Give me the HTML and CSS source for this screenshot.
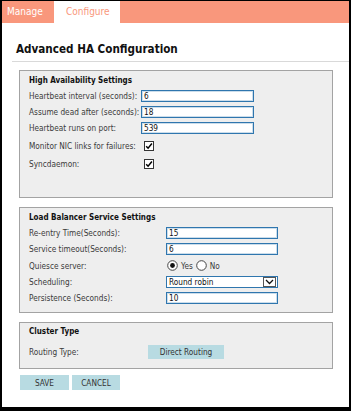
FILE: index.html
```html
<!DOCTYPE html>
<html>
<head>
<meta charset="utf-8">
<link rel="stylesheet" href="styles.css">
</head>
<body>
<div class="frame">
  <div class="tabs">
    <div class="tab tab-manage">Manage</div>
    <div class="tab tab-active">Configure</div>
  </div>
  <div class="content">
    <div class="page-head"><h1 class="title">Advanced HA Configuration</h1></div>

    <div class="panel panel-ha">
      <div class="panel-title">High Availability Settings</div>
      <div class="row"><span class="label lw1">Heartbeat interval (seconds):</span><span class="input w1">6</span></div>
      <div class="row"><span class="label lw1">Assume dead after (seconds):</span><span class="input w1">18</span></div>
      <div class="row"><span class="label lw1">Heartbeat runs on port:</span><span class="input w1">539</span></div>
      <div class="row row-tall"><span class="label lw1">Monitor NIC links for failures:</span><span class="check"><svg width="10" height="10" viewBox="0 0 10 10"><rect x="0.5" y="0.5" width="9" height="9" fill="#fff" stroke="#333"/><path d="M2.2 5.2 L4.1 7.2 L7.9 2.6" fill="none" stroke="#000" stroke-width="1.5"/></svg></span></div>
      <div class="row row-tall2"><span class="label lw1">Syncdaemon:</span><span class="check"><svg width="10" height="10" viewBox="0 0 10 10"><rect x="0.5" y="0.5" width="9" height="9" fill="#fff" stroke="#333"/><path d="M2.2 5.2 L4.1 7.2 L7.9 2.6" fill="none" stroke="#000" stroke-width="1.5"/></svg></span></div>
    </div>

    <div class="panel panel-lb">
      <div class="panel-title">Load Balancer Service Settings</div>
      <div class="row"><span class="label lw2">Re-entry Time(Seconds):</span><span class="input w2">15</span></div>
      <div class="row"><span class="label lw2">Service timeout(Seconds):</span><span class="input w2">6</span></div>
      <div class="row row-mid"><span class="label lw2">Quiesce server:</span>
        <span class="radio"><svg width="11" height="11" viewBox="0 0 11 11"><circle cx="5.5" cy="5.5" r="4.8" fill="#fff" stroke="#444"/><circle cx="5.5" cy="5.5" r="2.4" fill="#111"/></svg></span><span class="radio-text">Yes</span>
        <span class="radio radio2"><svg width="11" height="11" viewBox="0 0 11 11"><circle cx="5.5" cy="5.5" r="4.8" fill="#fff" stroke="#444"/></svg></span><span class="radio-text">No</span>
      </div>
      <div class="row"><span class="label lw2">Scheduling:</span><span class="select w2"><span class="select-text">Round robin</span><span class="select-btn"><svg width="9" height="6" viewBox="0 0 9 6"><path d="M1 1 L4.5 4.5 L8 1" fill="none" stroke="#111" stroke-width="1.3"/></svg></span></span></div>
      <div class="row"><span class="label lw2">Persistence (Seconds):</span><span class="input w2">10</span></div>
    </div>

    <div class="panel panel-ct">
      <div class="panel-title">Cluster Type</div>
      <div class="row row-btn"><span class="label lw3">Routing Type:</span><span class="btn btn-route">Direct Routing</span></div>
    </div>

    <div class="actions">
      <span class="btn btn-save">SAVE</span>
      <span class="btn btn-cancel">CANCEL</span>
    </div>
  </div>
</div>
</body>
</html>
```

FILE: styles.css
```css
html, body {
  margin: 0;
  padding: 0;
  background: #fff;
}
.frame {
  width: 351px;
  height: 411px;
  box-sizing: border-box;
  border-style: solid;
  border-color: #000;
  border-width: 1px 2px 4px 2px;
  background: #fff;
  font-family: "DejaVu Sans Condensed", "DejaVu Sans", "Liberation Sans", sans-serif;
  color: #333;
  overflow: hidden;
}
.tabs {
  display: flex;
  height: 22px;
  background: #f9977c;
}
.tab {
  font-size: 10px;
  line-height: 22px;
  height: 22px;
  box-sizing: border-box;
}
.tab-manage {
  width: 52px;
  padding-left: 5px;
  color: #fff;
}
.tab-active {
  width: 66px;
  padding-left: 12px;
  background: #fff;
  color: #f9977c;
}
.content {
  padding-left: 10px;
}
.page-head {
  height: 39px;
  box-sizing: border-box;
  padding-top: 18px;
  border-bottom: 1px solid #d9d9d9;
}
.title {
  margin: 0;
  padding-left: 4px;
  font-size: 11.6px;
  line-height: 16px;
  font-weight: bold;
  color: #111;
}
.panel {
  margin-left: 7px;
  width: 314px;
  box-sizing: border-box;
  border: 1px solid #a3a3a3;
  background: #eeeeee;
  padding-left: 9px;
}
.panel-ha {
  margin-top: 8px;
  padding-top: 3px;
  padding-bottom: 25px;
}
.panel-lb {
  margin-top: 9px;
  padding-top: 3px;
  padding-bottom: 6px;
}
.panel-ct {
  margin-top: 9px;
  padding-top: 2px;
  padding-bottom: 9px;
}
.panel-title {
  font-size: 8px;
  font-weight: bold;
  line-height: 14px;
  height: 14px;
  color: #111;
}
.row {
  display: flex;
  align-items: center;
  height: 16px;
  font-size: 8.2px;
}
.row-tall {
  height: 20px;
}
.row-tall2 {
  height: 16px;
}
.row-mid {
  height: 17px;
}
.row-btn {
  height: 14px;
  margin-top: 6px;
}
.label {
  flex: none;
  white-space: nowrap;
  color: #3a3a3a;
}
.lw1 { width: 112px; }
.lw2 { width: 137px; }
.lw3 { width: 119px; }
.input {
  box-sizing: border-box;
  height: 12px;
  line-height: 10px;
  border: 1px solid #2f76ae;
  box-shadow: inset 0 0 0 1px rgba(47, 118, 174, 0.25);
  background: #fff;
  padding-left: 2px;
  color: #111;
}
.w1 { width: 113px; }
.w2 { width: 112px; }
.check {
  display: flex;
  margin-left: 3px;
}
.radio {
  display: flex;
  margin-left: 1px;
}
.radio2 {
  margin-left: 3px;
}
.radio-text {
  margin-left: 3px;
  color: #3a3a3a;
}
.select {
  box-sizing: border-box;
  height: 12px;
  border: 1px solid #2f76ae;
  background: #fff;
  display: flex;
  align-items: center;
  justify-content: space-between;
  color: #111;
}
.select-text {
  padding-left: 2px;
  line-height: 10px;
}
.select-btn {
  box-sizing: border-box;
  width: 13px;
  height: 10px;
  margin-right: 1px;
  border: 1px solid #555;
  background: #fff;
  display: flex;
  align-items: center;
  justify-content: center;
}
.btn {
  display: flex;
  align-items: center;
  justify-content: center;
  background: #b8dbe2;
  color: #333;
  font-size: 8.2px;
}
.btn-route {
  width: 76px;
  height: 14px;
}
.actions {
  display: flex;
  gap: 3px;
  margin-top: 6px;
  margin-left: 8px;
}
.btn-save {
  width: 49px;
  height: 15px;
}
.btn-cancel {
  width: 48px;
  height: 15px;
}
```
